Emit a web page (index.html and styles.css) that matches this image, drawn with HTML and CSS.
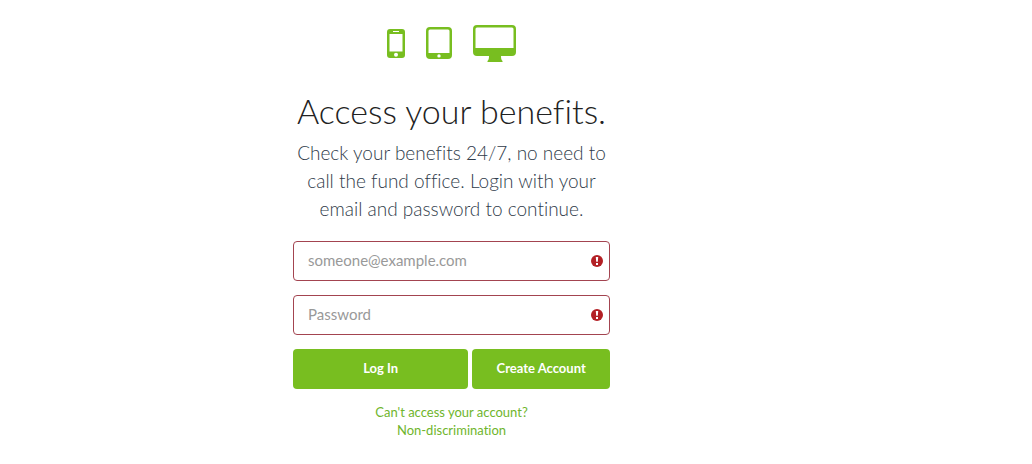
FILE: index.html
```html
<!DOCTYPE html>
<html lang="en">
<head>
    <meta charset="UTF-8">
    <title>Access your benefits</title>
    <meta name="viewport" content="width=device-width, initial-scale=1">
    <link rel="stylesheet" href="styles.css">
</head>
<body>
    <main class="page">
        <div class="login">
            <div class="devices">
                <svg width="18" height="29" viewBox="0 0 18 29" aria-hidden="true">
                    <path fill-rule="evenodd" d="M3 0h12a3 3 0 0 1 3 3v23a3 3 0 0 1-3 3H3a3 3 0 0 1-3-3V3a3 3 0 0 1 3-3zM2.500 5v17.500h13V5zM6 2v1h6V2zM9 23.800a2 2 0 1 0 0 4 2 2 0 0 0 0-4z"/>
                </svg>
                <svg width="26" height="32" viewBox="0 0 26 32" aria-hidden="true">
                    <path fill-rule="evenodd" d="M4 0h18a4 4 0 0 1 4 4v24a4 4 0 0 1-4 4H4a4 4 0 0 1-4-4V4a4 4 0 0 1 4-4zM4 2.500A1.500 1.500 0 0 0 2.500 4v22h21V4A1.500 1.500 0 0 0 22 2.500zM13 27.200a1.700 1.700 0 1 0 0 3.400 1.700 1.700 0 0 0 0-3.400z"/>
                </svg>
                <svg width="43" height="37" viewBox="0 0 43 37" aria-hidden="true">
                    <path fill-rule="evenodd" d="M4 0h35a4 4 0 0 1 4 4v23a4 4 0 0 1-4 4H28c0 3 .5 4 1.500 5v1h-15v-1c1-1 1.500-2 1.500-5H4a4 4 0 0 1-4-4V4a4 4 0 0 1 4-4zM4 2.500A1.500 1.500 0 0 0 2.500 4v19h38V4A1.500 1.500 0 0 0 39 2.500z"/>
                </svg>
            </div>
            <h1>Access your benefits.</h1>
            <p class="intro">Check your benefits 24/7, no need to call the fund office. Login with your email and password to continue.</p>
            <form class="login-form">
                <div class="field">
                    <input type="email" aria-label="Email" placeholder="someone@example.com">
                    <svg class="error-icon" viewBox="0 0 12 12" aria-hidden="true">
                        <circle cx="6" cy="6" r="6"/>
                        <path d="M4.800 2h2.400l-.4 4.800H5.200zM5 8h2v2H5z"/>
                    </svg>
                </div>
                <div class="field">
                    <input type="password" aria-label="Password" placeholder="Password">
                    <svg class="error-icon" viewBox="0 0 12 12" aria-hidden="true">
                        <circle cx="6" cy="6" r="6"/>
                        <path d="M4.800 2h2.400l-.4 4.800H5.200zM5 8h2v2H5z"/>
                    </svg>
                </div>
                <div class="actions">
                    <button type="submit">Log In</button>
                    <button type="button">Create Account</button>
                </div>
            </form>
            <div class="links">
                <a href="#">Can't access your account?</a>
                <a href="#">Non-discrimination</a>
            </div>
        </div>
    </main>
</body>
</html>
```
FILE: styles.css
```css
body {
    margin: 0;
    background: #fff;
    color: #222;
    font-family: Lato, "Liberation Sans", sans-serif;
    font-variant-ligatures: none;
}
.page {
    padding: 24px 12.5% 24px 0;
}
.login {
    max-width: 317px;
    margin: 0 auto;
    text-align: center;
}
.devices {
    display: flex;
    justify-content: center;
    align-items: center;
    gap: 21px;
    height: 38px;
}
.devices svg {
    fill: #78be20;
}
h1 {
    margin: 29px 0 8px;
    font-size: 34px;
    font-weight: 300;
    line-height: 40px;
    white-space: nowrap;
}
.intro {
    margin: 0 0 18px;
    color: #2f3b4a;
    font-size: 19px;
    font-weight: 300;
    line-height: 28px;
}
.field {
    position: relative;
    margin-bottom: 14px;
}
.field input {
    display: block;
    box-sizing: border-box;
    width: 100%;
    height: 40px;
    padding: 0 32px 2px 14px;
    border: 1px solid #a34450;
    border-radius: 4px;
    background: #fff;
    color: #333;
    font-family: inherit;
    font-size: 15px;
}
.field input::placeholder {
    color: #999;
    opacity: 1;
}
.error-icon {
    position: absolute;
    top: 14px;
    right: 7px;
    width: 12px;
    height: 12px;
    fill: #b32025;
}
.error-icon path {
    fill: #fff;
}
.actions {
    display: grid;
    grid-template-columns: 14fr 11fr;
    gap: 4px;
}
.actions button {
    height: 40px;
    padding: 0 0 2px;
    border: 0;
    border-radius: 4px;
    background: #78be20;
    color: #fff;
    font-family: inherit;
    font-size: 13px;
    font-weight: 700;
    cursor: pointer;
}
.links {
    display: flex;
    flex-direction: column;
    align-items: center;
    margin-top: 14px;
    font-size: 13px;
    line-height: 18px;
}
.links a {
    color: #6fb52c;
    text-decoration: none;
}
```
